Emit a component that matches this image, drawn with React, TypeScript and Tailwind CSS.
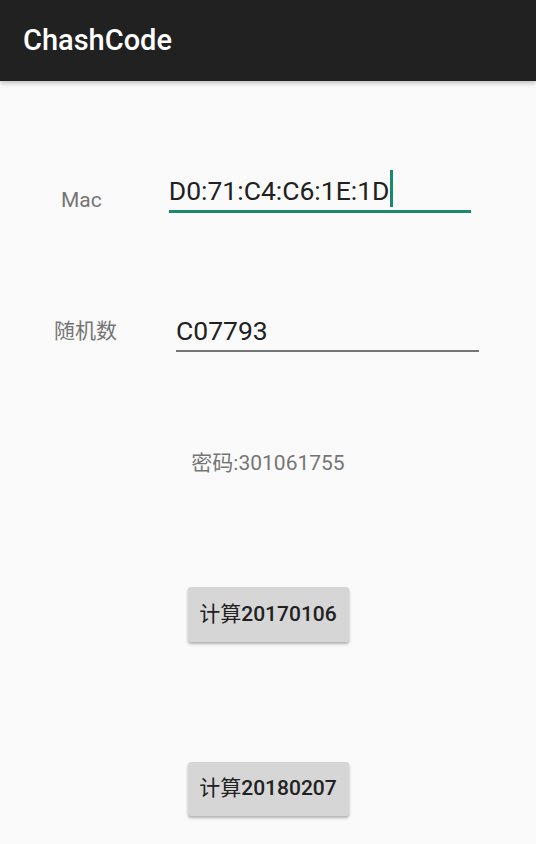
import React from 'react'

const font = { fontFamily: 'Roboto, "Noto Sans CJK SC", sans-serif' }

const App: React.FC = () => {
  return (
    <div className="min-h-[844px] w-full bg-[#fafafa] flex flex-col" style={font}>
      {/* App bar */}
      <div className="h-[81px] bg-[#212121] flex items-center px-[23px] shadow-[0_2px_5px_rgba(0,0,0,0.25)] relative">
        <h1 className="text-white text-[29px] font-medium leading-none">ChashCode</h1>
      </div>

      {/* Mac row */}
      <div className="flex items-start mt-[95px]">
        <label className="ml-[61px] mt-[12px] text-[21px] leading-[25px] text-[#757575]">Mac</label>
        <div className="ml-[67px] w-[302px] pb-[4px] border-b-[3px] border-[#1b8a6c] text-[26.5px] leading-[30px] text-[#212121]">
          <span className="relative">
            D0:71:C4:C6:1E:1D
            <span className="absolute right-[-4px] top-[-5px] h-[37px] w-[3px] bg-[#1b8a6c]" />
          </span>
        </div>
      </div>

      {/* Random number row */}
      <div className="flex items-start mt-[103px]">
        <label className="ml-[54px] mt-[3px] text-[21px] leading-[25px] text-[#757575]">随机数</label>
        <div className="ml-[59px] w-[303px] pb-[4px] border-b-2 border-[#757575] text-[26.5px] leading-[30px] text-[#212121]">
          C07793
        </div>
      </div>

      {/* Result */}
      <p className="mt-[99px] text-center text-[21px] leading-[25px] text-[#757575]">密码:301061755</p>

      {/* Buttons */}
      <div className="flex flex-col items-center">
        <button className="mt-[111px] w-[161px] h-[55px] bg-[#d6d6d6] rounded-[3px] shadow-[0_2px_3px_rgba(0,0,0,0.3)] text-[21px] font-medium text-[#212121]">
          <span className="font-normal">计算</span>20170106
        </button>
        <button className="mt-[120px] w-[161px] h-[54px] bg-[#d6d6d6] rounded-[3px] shadow-[0_2px_3px_rgba(0,0,0,0.3)] text-[21px] font-medium text-[#212121]">
          <span className="font-normal">计算</span>20180207
        </button>
      </div>
    </div>
  )
}

export default App
